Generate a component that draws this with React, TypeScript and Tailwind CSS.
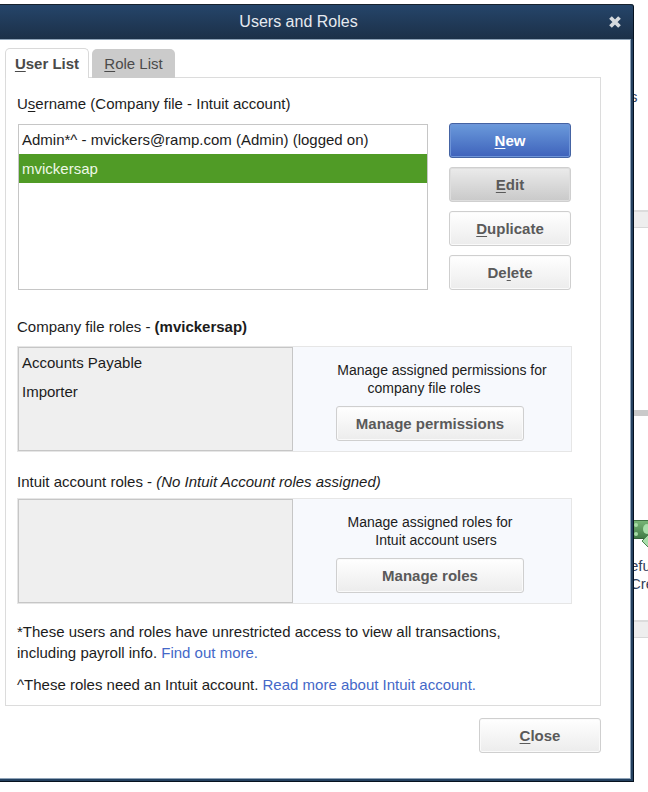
import type { ReactNode } from 'react'
import clsx from 'clsx'

const USERS = [
  { name: 'Admin*^ - mvickers@ramp.com (Admin) (logged on)', selected: false },
  { name: 'mvickersap', selected: true },
]

const BUTTON_STYLES = {
  plain: 'border-[#cfcfcf] from-white to-[#ececec] text-[#5a5a5a] shadow-[inset_0_0_0_1px_#fafafa]',
  primary: 'border-[#4463a3] from-[#6b9adb] to-[#3f62bb] text-white shadow-[inset_0_0_0_1px_#6f95d8]',
  pressed: 'border-[#cfcfcf] from-[#ebebeb] to-[#c9c9c9] text-[#5a5a5a] shadow-[inset_0_0_0_1px_#dedede]',
}

// Label with its keyboard shortcut letter underlined
function Mnemonic({ text, at }: { text: string; at: number }) {
  return (
    <>
      {text.slice(0, at)}
      <span className="underline underline-offset-2">{text[at]}</span>
      {text.slice(at + 1)}
    </>
  )
}

interface ButtonProps {
  children: ReactNode
  kind?: keyof typeof BUTTON_STYLES
  wide?: boolean
}

function Button({ children, kind = 'plain', wide = false }: ButtonProps) {
  return (
    <button
      type="button"
      className={clsx(
        'h-[35px] shrink-0 rounded-[3px] border bg-linear-to-b text-[15px] leading-5 font-bold',
        wide ? 'w-[188px]' : 'w-[122px]',
        BUTTON_STYLES[kind],
      )}
    >
      {children}
    </button>
  )
}

interface RoleBoxProps {
  label: string
  roles: string[]
  children: ReactNode
}

function RoleBox({ label, roles, children }: RoleBoxProps) {
  return (
    <div className="flex h-[106px] border border-[#e6e6e6] bg-[#f7f9fd]">
      <ul aria-label={label} className="w-[275px] shrink-0 border border-[#c6c6c6] bg-[#efefef]">
        {roles.map((role) => (
          <li key={role} className="h-[29px] px-[3px] py-[5px]">{role}</li>
        ))}
      </ul>
      <div className="flex flex-1 flex-col items-center pt-[14px] pr-1 text-[14px] leading-[18px]">
        {children}
      </div>
    </div>
  )
}

// Part of the home page that shows past the dialog
function HomeEdge() {
  return (
    <aside className="flex w-[14px] shrink-0 flex-col overflow-hidden text-[15px] leading-[18px] text-[#33415c]">
      <div className="h-[210px] pt-[88px]">
        <span className="-ml-1 block">s</span>
      </div>
      <div className="h-[18px] border-t-2 border-b border-t-[#dcdcdc] border-b-[#d8d8d8] bg-[#eeeeee]" />
      <div className="h-[182px]" />
      <div className="h-[6px] bg-[#cacaca]" />
      <div className="h-[104px]" />
      <svg width="14" height="30" viewBox="0 0 14 30" aria-hidden="true" className="shrink-0">
        <defs>
          <linearGradient id="bill" x1="0" y1="0" x2="0" y2="1">
            <stop offset="0" stopColor="#79b878" />
            <stop offset="1" stopColor="#3f7844" />
          </linearGradient>
        </defs>
        <rect x="0" y="0" width="14" height="19" fill="url(#bill)" />
        <rect x="0" y="0" width="14" height="1" fill="#3f7043" />
        <rect x="0" y="18" width="10" height="1" fill="#35633a" />
        <circle cx="2" cy="5" r="2" fill="#a5dca5" />
        <circle cx="2" cy="14" r="2" fill="#a5dca5" />
        <ellipse cx="13" cy="9" rx="4" ry="5" fill="#a9dfab" />
        <path d="M15 14 L8 21 L15 28 Z" fill="#a9dfab" stroke="#4c8350" />
      </svg>
      <div className="h-[70px] pt-[7px] whitespace-nowrap">
        <span className="-ml-1 block">efu</span>
        <span className="-ml-1 block">Cre</span>
      </div>
      <div className="h-[18px] border-t-2 border-b border-t-[#dcdcdc] border-b-[#d8d8d8] bg-[#eeeeee]" />
    </aside>
  )
}

export default function App() {
  return (
    <div className="flex min-h-screen bg-white font-['Liberation_Sans',Arial,sans-serif] text-[15px] leading-5 text-[#1c1c1c]">
      <section
        aria-labelledby="dialog-title"
        className="mt-1 mb-[10px] flex min-w-0 flex-1 flex-col rounded-tr-[3px] border-r border-b border-[#06121f] bg-[#23405f]"
      >
        <header className="flex h-[35px] shrink-0 items-center rounded-tr-[3px] border-t border-[#17222e] bg-linear-to-b from-[#25456a] to-[#1c3048] pr-[10px] text-[#e6eaf0]">
          <h1 id="dialog-title" className="flex-1 pr-[10px] text-center text-[16px] leading-5">Users and Roles</h1>
          <button type="button" aria-label="Close window" className="flex size-4 items-center justify-center">
            <svg width="14" height="14" viewBox="0 0 14 14" aria-hidden="true">
              <path d="M2.5 2.5 L11.5 11.5 M11.5 2.5 L2.5 11.5" stroke="#d6dade" strokeWidth="3.8" />
            </svg>
          </button>
        </header>

        <div className="mr-[2px] mb-[2px] flex-1 border-t border-r border-b border-[#8fa3b8] bg-white pt-2 pr-[29px] pb-6 pl-[5px]">
          <div role="tablist" className="relative z-10 -mb-px flex items-end gap-[3px] text-[#4a4a4a]">
            <button
              type="button"
              role="tab"
              aria-selected="true"
              className="h-[30px] w-[84px] rounded-t-[5px] border border-b-0 border-[#d9d9d9] bg-white font-bold"
            >
              <Mnemonic text="User List" at={0} />
            </button>
            <button
              type="button"
              role="tab"
              aria-selected="false"
              className="h-[29px] w-[83px] rounded-t-[5px] bg-[#cbcbcb]"
            >
              <Mnemonic text="Role List" at={0} />
            </button>
          </div>

          <div role="tabpanel" className="border border-[#dcdcdc] pt-4 pr-7 pb-[10px] pl-[11px]">
            <h2 id="users-label"><Mnemonic text="Username (Company file - Intuit account)" at={1} /></h2>
            <div className="mt-[9px] mr-px flex gap-[21px]">
              <ul role="listbox" aria-labelledby="users-label" className="mt-px ml-px flex-1 border border-[#c6c6c6]">
                {USERS.map((user) => (
                  <li
                    key={user.name}
                    role="option"
                    aria-selected={user.selected}
                    className={clsx('h-[29px] px-[3px] py-[5px]', user.selected && 'bg-[#509b26] text-[#eef8e6]')}
                  >
                    {user.name}
                  </li>
                ))}
              </ul>
              <div className="flex flex-col gap-[9px]">
                <Button kind="primary"><Mnemonic text="New" at={0} /></Button>
                <Button kind="pressed"><Mnemonic text="Edit" at={0} /></Button>
                <Button><Mnemonic text="Duplicate" at={0} /></Button>
                <Button><Mnemonic text="Delete" at={2} /></Button>
              </div>
            </div>

            <h2 className="mt-[27px] mb-[9px]">
              Company file roles - <b>(mvickersap)</b>
            </h2>
            <RoleBox label="Company file roles" roles={['Accounts Payable', 'Importer']}>
              <span className="pl-6">Manage assigned permissions for</span>
              <span className="mb-[9px] pr-3">company file roles</span>
              <Button wide>Manage permissions</Button>
            </RoleBox>

            <h2 className="mt-5 mb-[6px]">
              Intuit account roles - <i>(No Intuit Account roles assigned)</i>
            </h2>
            <RoleBox label="Intuit account roles" roles={[]}>
              <span>Manage assigned roles for</span>
              <span className="mb-[9px] pl-3">Intuit account users</span>
              <Button wide>Manage roles</Button>
            </RoleBox>

            <p className="mt-[17px] leading-[21px]">
              *These users and roles have unrestricted access to view all transactions,
              <br />
              including payroll info. <a href="#find-out-more" className="text-[#4468c8]">Find out more.</a>
            </p>
            <p className="mt-[11px] leading-[21px]">
              ^These roles need an Intuit account.{' '}
              <a href="#intuit-account" className="text-[#4468c8]">Read more about Intuit account.</a>
            </p>
          </div>

          <div className="mt-3 flex justify-end">
            <Button><Mnemonic text="Close" at={0} /></Button>
          </div>
        </div>
      </section>
      <HomeEdge />
    </div>
  )
}
